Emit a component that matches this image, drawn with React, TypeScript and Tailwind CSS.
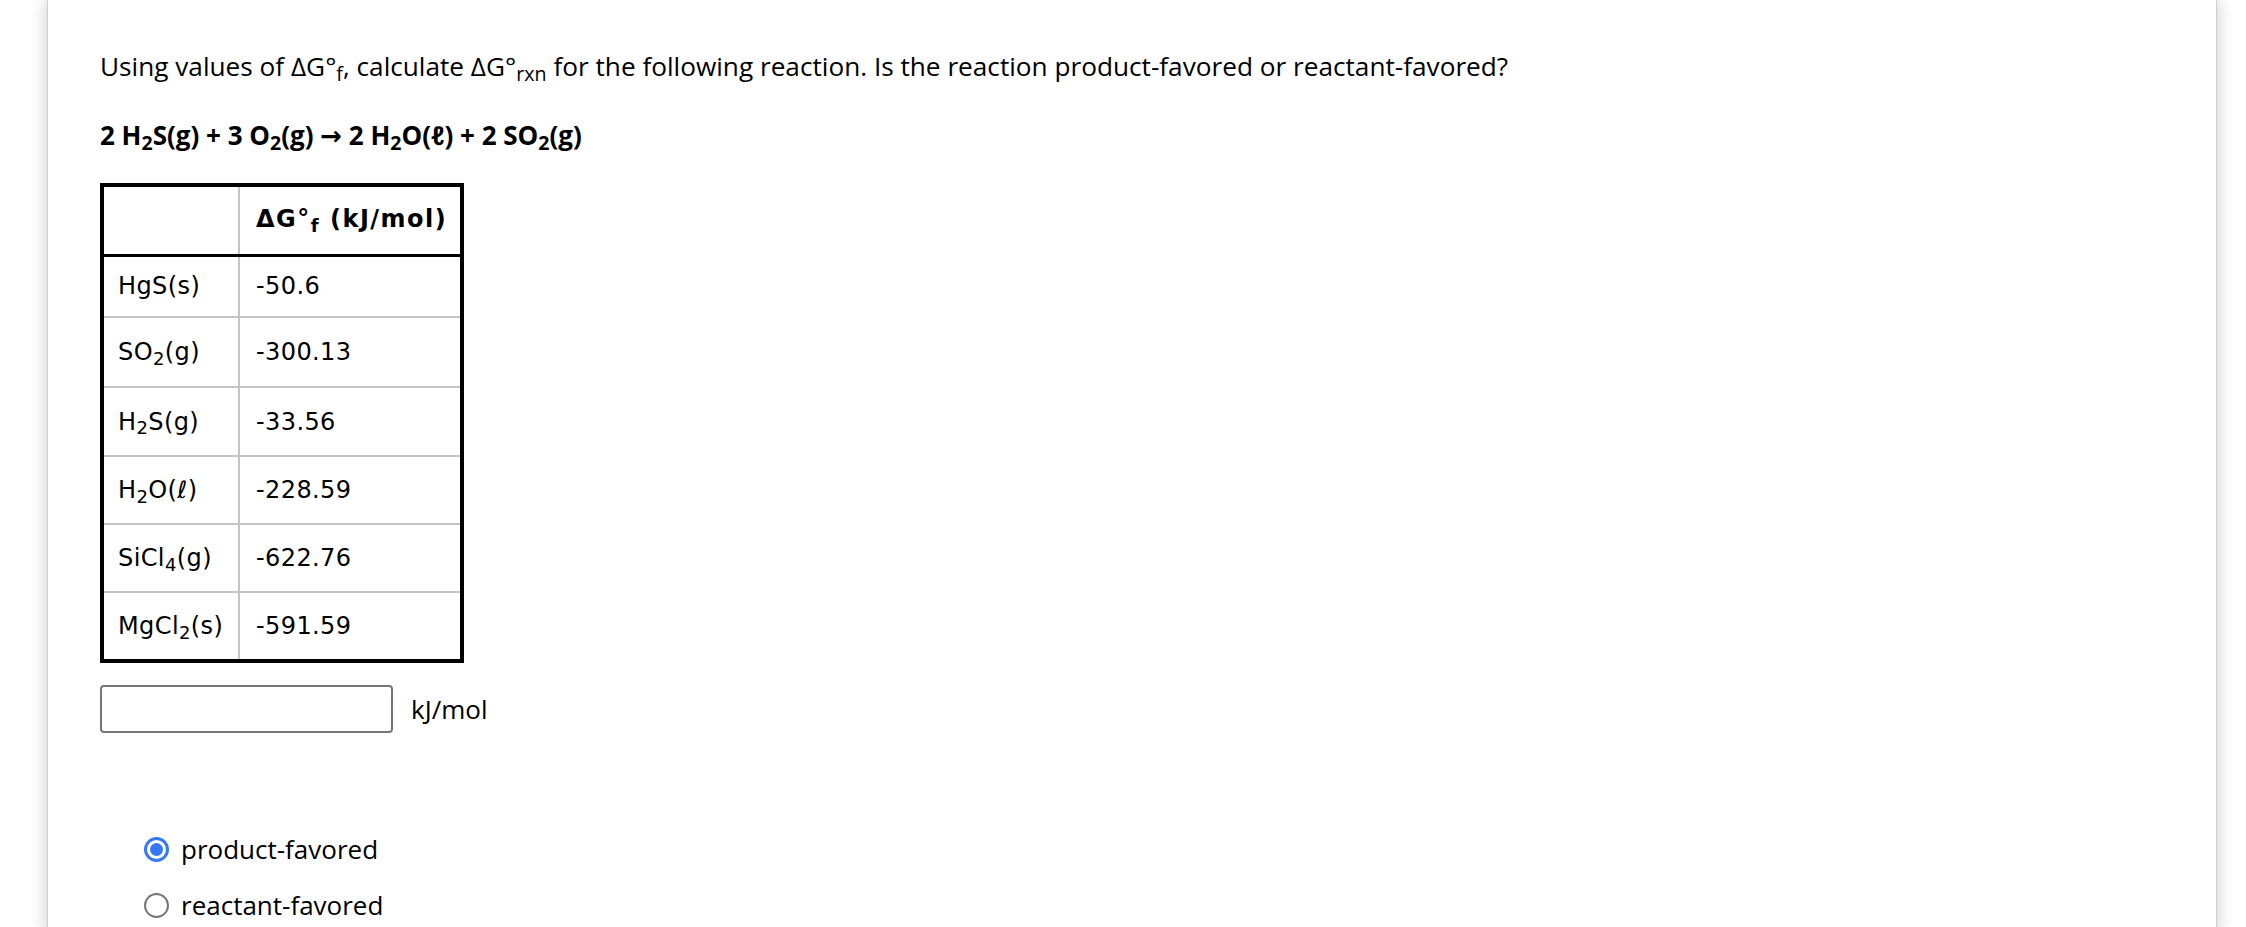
import React from 'react'

const rows: { name: React.ReactNode; value: string; h: string }[] = [
  { name: 'HgS(s)', value: '-50.6', h: 'h-[62px]' },
  { name: <>SO<sub>2</sub>(g)</>, value: '-300.13', h: 'h-[70px]' },
  { name: <>H<sub>2</sub>S(g)</>, value: '-33.56', h: 'h-[69px]' },
  { name: <>H<sub>2</sub>O(ℓ)</>, value: '-228.59', h: 'h-[68px]' },
  { name: <>SiCl<sub>4</sub>(g)</>, value: '-622.76', h: 'h-[68px]' },
  { name: <>MgCl<sub>2</sub>(s)</>, value: '-591.59', h: 'h-[69px]' },
]

function Radio({ checked, label }: { checked?: boolean; label: string }) {
  return (
    <label className="flex items-center h-[56px]">
      {checked ? (
        <span className="flex items-center justify-center w-[25px] h-[25px] rounded-full border-[3px] border-[#3478f6] bg-white">
          <span className="w-[13px] h-[13px] rounded-full bg-[#3478f6]" />
        </span>
      ) : (
        <span className="w-[25px] h-[25px] rounded-full border-2 border-[#767676] bg-white" />
      )}
      <span className="ml-[12px] text-[26px] leading-[34px] text-black">{label}</span>
    </label>
  )
}

export default function App() {
  return (
    <div className="min-h-screen bg-white overflow-hidden" style={{ fontFamily: '"Open Sans", "DejaVu Sans", sans-serif' }}>
      <div className="ml-[47px] mr-[29px] min-h-[927px] bg-white border-x border-[#cfcfcf] shadow-[0_0_16px_rgba(0,0,0,0.22)] pl-[52px] pt-[50px]">
        <p className="text-[26.2px] leading-[33px] text-black">
          Using values of ΔG°<sub>f</sub>, calculate ΔG°<sub>rxn</sub> for the following reaction. Is the reaction product-favored or reactant-favored?
        </p>

        <p className="mt-[36px] text-[26px] leading-[33px] font-bold text-black">
          2 H<sub>2</sub>S(g) + 3 O<sub>2</sub>(g) → 2 H<sub>2</sub>O(ℓ) + 2 SO<sub>2</sub>(g)
        </p>

        <table
          className="mt-[31px] border-collapse border-[4px] border-black text-[24px] text-black"
          style={{ fontFamily: '"DejaVu Sans", Verdana, sans-serif' }}
        >
          <thead>
            <tr className="h-[70px] border-b-[3px] border-black">
              <th className="w-[137px] border-r-2 border-[#c4c4c4]" />
              <th className="w-[223px] pl-[16px] pb-[2px] text-left font-bold tracking-[1.5px]">
                ΔG°<sub>f</sub> (kJ/mol)
              </th>
            </tr>
          </thead>
          <tbody>
            {rows.map((r, i) => (
              <tr key={i} className={`${r.h} ${i < rows.length - 1 ? 'border-b-2 border-[#c4c4c4]' : ''}`}>
                <td className="pl-[14px] pr-[6px] border-r-2 border-[#c4c4c4] whitespace-nowrap tracking-[0.4px]">{r.name}</td>
                <td className="pl-[16px] tracking-[0.4px]">{r.value}</td>
              </tr>
            ))}
          </tbody>
        </table>

        <div className="mt-[22px] flex items-center">
          <div className="w-[293px] h-[48px] rounded-[4px] border-2 border-[#767676] bg-white" />
          <span className="ml-[18px] text-[26px] leading-[33px] text-black">kJ/mol</span>
        </div>

        <div className="mt-[88px] ml-[44px] flex flex-col">
          <Radio checked label="product-favored" />
          <Radio label="reactant-favored" />
        </div>
      </div>
    </div>
  )
}
